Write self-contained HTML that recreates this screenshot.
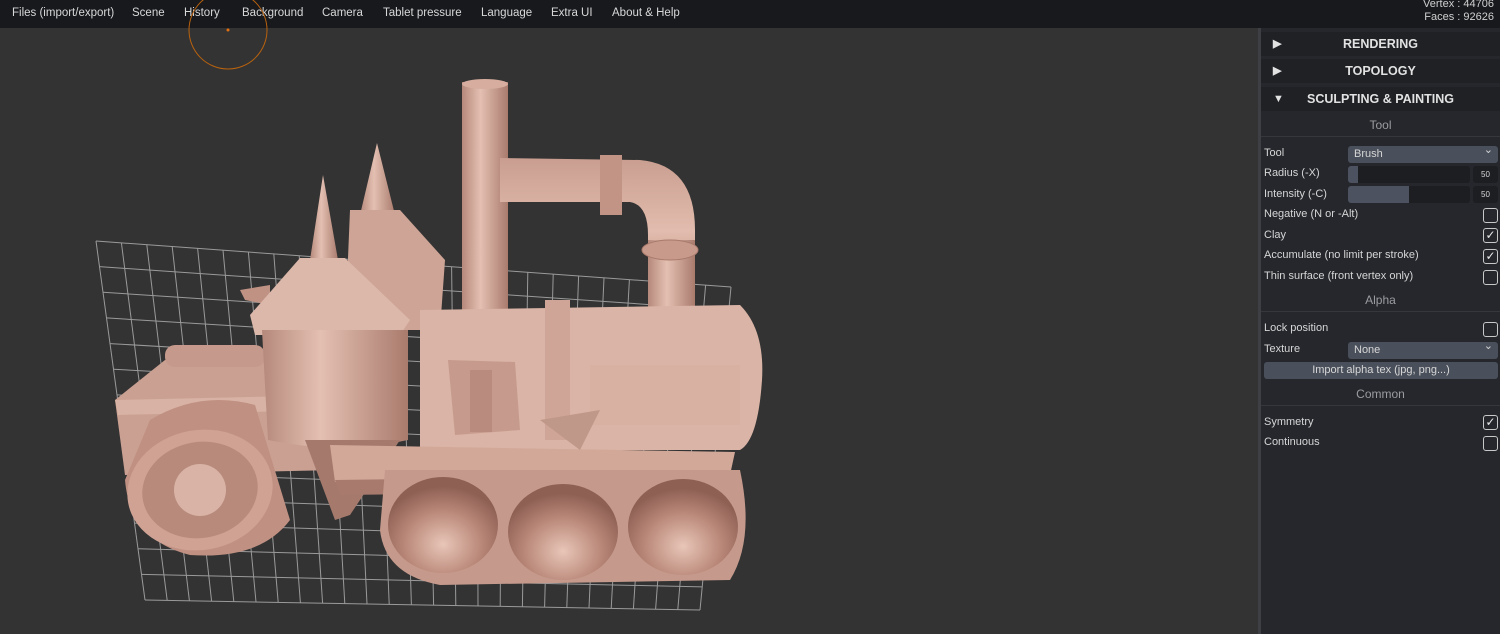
<!DOCTYPE html>
<html><head><meta charset="utf-8"><style>
*{margin:0;padding:0;box-sizing:border-box}
body{width:1500px;height:634px;overflow:hidden;background:#333333;font-family:"Liberation Sans",sans-serif;position:relative}
#top{position:absolute;left:0;top:0;width:1500px;height:28px;background:#17191d;color:#d8d8d8;font-size:11.5px}
#top span{position:absolute;top:7px}
#stats{position:absolute;right:6px;top:-2px;text-align:right;font-size:11px;line-height:13px;color:#d0d0d0}
#panel{position:absolute;left:1258px;top:28px;width:242px;height:606px;background:#25272c;border-left:3px solid #3d3f45;color:#d6d6d6;font-size:11px}
.hd{position:absolute;left:0;width:239px;height:24px;background:#1f2125;font-weight:bold;font-size:12.5px;color:#e2e2e2;text-align:center;line-height:24px}
.hd i{position:absolute;left:12px;font-style:normal;font-size:11px}
.sec{position:absolute;left:0;width:239px;text-align:center;color:#9a9ca0;font-size:12px;border-bottom:1px solid #35373c;height:22px;line-height:20px}
.lb{position:absolute;left:3px}
.cb{position:absolute;left:222px;width:15px;height:15px;border:1px solid #c8c8c8;border-radius:3px;color:#e8e8e8;font-size:12px;line-height:13px;text-align:center}
.sel{position:absolute;left:87px;width:150px;height:17px;background:#4a505b;border-radius:3px;font-size:11px;line-height:17px;padding-left:6px}
.sel:after{content:"⌄";position:absolute;right:5px;top:-4px;font-size:11px}
.bar{position:absolute;left:87px;width:122px;height:17px;background:#1c1e22;border-radius:3px;overflow:hidden}
.bar b{display:block;height:100%;background:#4c5260}
.num{position:absolute;left:212px;width:25px;height:17px;background:#1c1e22;border-radius:3px;font-size:8px;line-height:17px;text-align:center}
</style></head><body>
<div id="top">
<span style="left:12px">Files (import/export)</span><span style="left:132px">Scene</span><span style="left:184px">History</span><span style="left:242px">Background</span><span style="left:322px">Camera</span><span style="left:383px">Tablet pressure</span><span style="left:481px">Language</span><span style="left:551px">Extra UI</span><span style="left:612px">About &amp; Help</span>
<div id="stats">Vertex : 44706<br>Faces : 92626</div>
</div>
<svg id="vp" width="1258" height="634" style="position:absolute;left:0;top:0" xmlns="http://www.w3.org/2000/svg">
<defs>
<linearGradient id="cyl" x1="0" x2="1"><stop offset="0" stop-color="#b5897b"/><stop offset=".4" stop-color="#e4c0b2"/><stop offset="1" stop-color="#a97b6d"/></linearGradient>
<linearGradient id="cylv" x1="0" y1="0" x2="0" y2="1"><stop offset="0" stop-color="#c99e90"/><stop offset=".45" stop-color="#e2bcae"/><stop offset="1" stop-color="#a87a6c"/></linearGradient>
<radialGradient id="wh" cx=".5" cy=".7" r=".6"><stop offset="0" stop-color="#e8c6b8"/><stop offset=".6" stop-color="#b88677"/><stop offset="1" stop-color="#8e6054"/></radialGradient>
</defs>
<circle cx="228" cy="30" r="39" fill="none" stroke="#b8620e" stroke-width="1"/>
<circle cx="228" cy="30" r="1.5" fill="#e07010"/>
<g id="grid" stroke="#9a9a9a" stroke-width="1" fill="none"></g>
<g>
<rect x="462" y="82" width="46" height="270" fill="url(#cyl)"/>
<ellipse cx="485" cy="84" rx="23" ry="5" fill="#d6ad9f"/>
<path d="M500 158 L640 160 Q695 165 695 230 L695 320 L648 320 L648 235 Q648 205 630 202 L500 202 Z" fill="url(#cylv)"/>
<rect x="648" y="240" width="47" height="80" fill="url(#cyl)"/>
<rect x="600" y="155" width="22" height="60" fill="#c29486"/>
<ellipse cx="670" cy="250" rx="28" ry="10" fill="#c89a8c" stroke="#a87a6c"/>
<polygon points="377,143 395,215 360,215" fill="url(#cyl)"/>
<polygon points="350,210 400,210 445,260 440,330 345,330" fill="#cea496"/>
<path d="M420 310 L740 305 Q765 330 762 380 Q758 440 740 450 L420 450 Z" fill="#dab4a6"/>
<rect x="545" y="300" width="25" height="140" fill="#cfa597"/>
<rect x="590" y="365" width="150" height="60" fill="#d9b1a3"/>
<polygon points="448,360 515,362 520,430 455,435" fill="#c69b8d"/>
<rect x="470" y="370" width="22" height="62" fill="#b88b7e"/>
<polygon points="115,400 165,360 335,350 335,470 125,475" fill="#caa092"/>
<polygon points="115,400 335,395 335,410 118,415" fill="#d8b2a4"/>
<rect x="165" y="345" width="100" height="22" rx="10" fill="#c59a8c"/>
<polygon points="240,290 270,285 270,305 245,300" fill="#c09284"/>
<polygon points="323,175 338,260 310,260" fill="url(#cyl)"/>
<polygon points="300,258 345,258 410,320 400,335 255,335 250,315" fill="#dcb8aa"/>
<path d="M262 330 L408 330 L408 440 Q340 455 268 440 Z" fill="url(#cyl)"/>
<polygon points="305,440 400,440 350,515 335,520" fill="#a57a6d"/>
<path d="M150 420 Q200 390 255 405 L290 520 Q260 560 190 555 Q130 540 125 480 Z" fill="#c09082"/>
<ellipse cx="200" cy="490" rx="73" ry="60" fill="#cfa294" transform="rotate(-10 200 490)"/>
<ellipse cx="200" cy="490" rx="58" ry="48" fill="#b78a7c" transform="rotate(-10 200 490)"/>
<circle cx="200" cy="490" r="26" fill="#d9b3a5"/>
<polygon points="330,445 735,452 730,475 335,482" fill="#d2a899"/>
<polygon points="335,480 730,475 725,490 340,495" fill="#a77a6d"/>
<polygon points="540,420 600,410 580,450" fill="#c0988a"/>
<path d="M385 470 L740 470 Q755 540 730 580 L440 585 Q385 575 380 530 Z" fill="#c59a8c"/>
<ellipse cx="443" cy="525" rx="55" ry="48" fill="url(#wh)"/>
<ellipse cx="563" cy="532" rx="55" ry="48" fill="url(#wh)"/>
<ellipse cx="683" cy="527" rx="55" ry="48" fill="url(#wh)"/>
</g>
</svg>
<div id="panel">
<div class="hd" style="top:4px"><i>▶</i>RENDERING</div>
<div class="hd" style="top:31px"><i>▶</i>TOPOLOGY</div>
<div class="hd" style="top:59px"><i>▼</i>SCULPTING &amp; PAINTING</div>
<div class="sec" style="top:87px">Tool</div>
<div class="lb" style="top:119px">Tool</div><div class="sel" style="top:118px">Brush</div>
<div class="lb" style="top:139px">Radius (-X)</div><div class="bar" style="top:138px"><b style="width:10px"></b></div><div class="num" style="top:138px">50</div>
<div class="lb" style="top:160px">Intensity (-C)</div><div class="bar" style="top:158px"><b style="width:61px"></b></div><div class="num" style="top:158px">50</div>
<div class="lb" style="top:180px">Negative (N or -Alt)</div><div class="cb" style="top:180px"></div>
<div class="lb" style="top:201px">Clay</div><div class="cb" style="top:200px">✓</div>
<div class="lb" style="top:221px">Accumulate (no limit per stroke)</div><div class="cb" style="top:221px">✓</div>
<div class="lb" style="top:242px">Thin surface (front vertex only)</div><div class="cb" style="top:242px"></div>
<div class="sec" style="top:262px">Alpha</div>
<div class="lb" style="top:294px">Lock position</div><div class="cb" style="top:294px"></div>
<div class="lb" style="top:315px">Texture</div><div class="sel" style="top:314px">None</div>
<div style="position:absolute;left:3px;top:334px;width:234px;height:17px;background:#4a505b;border-radius:3px;text-align:center;line-height:17px">Import alpha tex (jpg, png...)</div>
<div class="sec" style="top:356px">Common</div>
<div class="lb" style="top:388px">Symmetry</div><div class="cb" style="top:387px">✓</div>
<div class="lb" style="top:408px">Continuous</div><div class="cb" style="top:408px"></div>
</div>
<script>
var g=document.getElementById('grid'),s='';
var TL=[96,241],TR=[731,287],BL=[145,600],BR=[700,610],C=25,R=14;
function P(u,v){var tx=TL[0]+(TR[0]-TL[0])*u,ty=TL[1]+(TR[1]-TL[1])*u,bx=BL[0]+(BR[0]-BL[0])*u,by=BL[1]+(BR[1]-BL[1])*u;return [tx+(bx-tx)*v,ty+(by-ty)*v];}
for(var i=0;i<=C;i++){var a=P(i/C,0),b=P(i/C,1);s+='<line x1="'+a[0]+'" y1="'+a[1]+'" x2="'+b[0]+'" y2="'+b[1]+'"/>';}
for(var j=0;j<=R;j++){var a=P(0,j/R),b=P(1,j/R);s+='<line x1="'+a[0]+'" y1="'+a[1]+'" x2="'+b[0]+'" y2="'+b[1]+'"/>';}
g.innerHTML=s;
</script>
</body></html>
